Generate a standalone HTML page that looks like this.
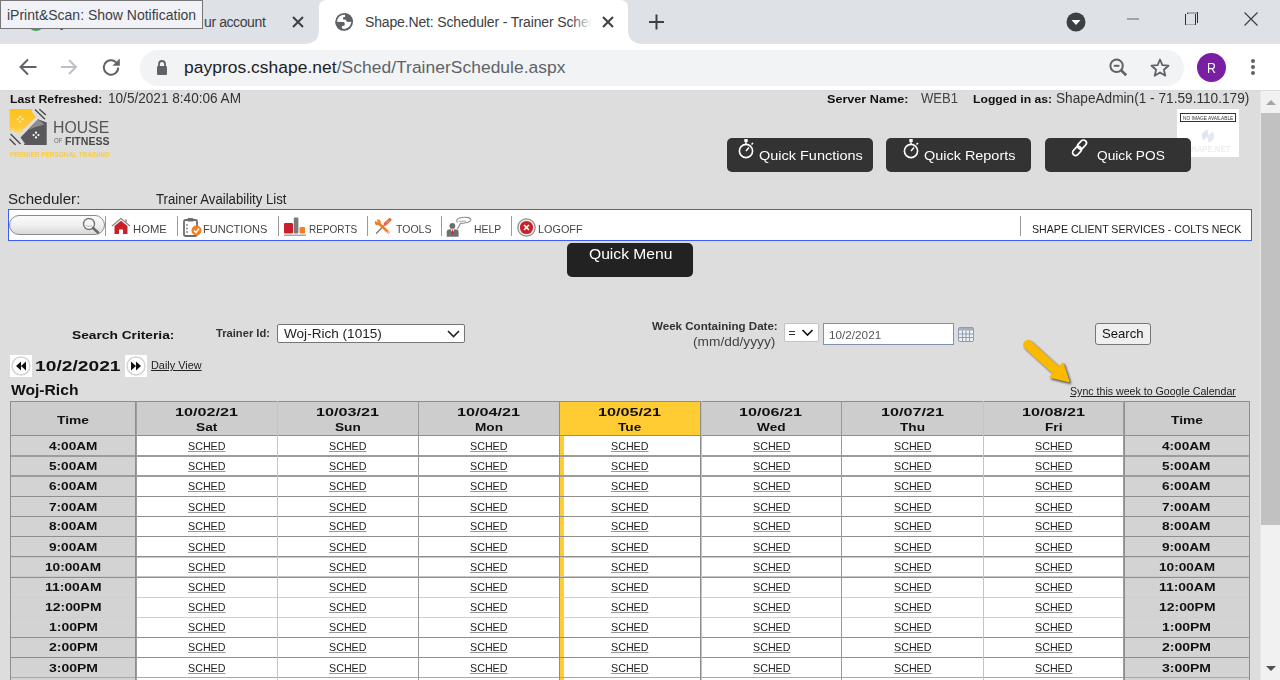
<!DOCTYPE html>
<html><head><meta charset="utf-8">
<style>
*{margin:0;padding:0;box-sizing:border-box}
html,body{width:1280px;height:680px;overflow:hidden;background:#dddddd;font-family:"Liberation Sans",sans-serif;position:relative}
.abs{position:absolute}
#tabs{left:0;top:0;width:1280px;height:44px;background:#dee1e6}
#addr{left:0;top:44px;width:1280px;height:46px;background:#fff}
#sep{left:0;top:90px;width:1280px;height:1px;background:#d9dadd}
#omni{left:140px;top:50px;width:1044px;height:36px;border-radius:18px;background:#f1f3f4}
.url{left:184px;top:57px;font-size:17.4px;color:#202124;white-space:nowrap;letter-spacing:0.05px}
.url span{color:#5f6368}
#page{left:0;top:91px;width:1260px;height:589px;background:#dddddd;overflow:hidden}
#sb{left:1260px;top:91px;width:20px;height:589px;background:#f1f1f1;border-left:1px solid #e6e6e6}
#thumb{left:1261px;top:113px;width:19px;height:412px;background:#c1c1c1}
.t{position:absolute;white-space:nowrap}
</style></head><body>
<div id="tabs" class="abs"></div>
<!-- inactive tab -->
<div class="abs t" style="left:204px;top:14px;font-size:14px;letter-spacing:-0.4px;color:#3c4043">ur account</div>
<svg class="abs" style="left:291px;top:15px" width="14" height="14" viewBox="0 0 14 14"><path d="M2 2L12 12M12 2L2 12" stroke="#3c4043" stroke-width="2"/></svg>
<!-- active tab -->
<svg class="abs" style="left:303px;top:0" width="341" height="44" viewBox="0 0 341 44"><path d="M0 44 Q16 44 16 30 L16 8 Q16 0 24 0 L317 0 Q325 0 325 8 L325 30 Q325 44 341 44 Z" fill="#fff"/></svg>
<svg class="abs" style="left:334px;top:12px" width="20" height="20" viewBox="-10.15 -9.85 20 20"><defs><clipPath id="gc"><circle r="8.9"/></clipPath></defs><circle r="8.9" fill="#fff"/><g clip-path="url(#gc)" fill="#5f6368"><path d="M1 -9 L1 -5.1 C0 -4.9 -1 -4.7 -1.1 -4 L-1.2 -2.5 C-0.5 -2 1.2 -2.2 1.7 -1.9 C2.3 -1.3 2.2 -0.4 3 0 C4.5 0.3 6 0 9 -0.3 L9 -9 Z"/><path d="M-9 -0.2 L-0.6 0.2 C0.3 0.5 0.5 1 0.5 1.5 L0.5 3.6 C-0.5 3.8 -2.3 4.2 -2.3 5 L-2.3 6.8 C-2 8 -1 9 -0.5 9 L-9 9 Z"/></g><circle r="8" fill="none" stroke="#5f6368" stroke-width="1.8"/></svg>
<div class="abs t" style="left:365px;top:14px;font-size:14px;letter-spacing:-0.15px;color:#3c4043;width:227px;overflow:hidden">Shape.Net: Scheduler - Trainer Schedule</div>
<div class="abs" style="left:571px;top:10px;width:21px;height:24px;background:linear-gradient(to right,rgba(255,255,255,0),#fff)"></div>
<svg class="abs" style="left:601px;top:15px" width="14" height="14" viewBox="0 0 14 14"><path d="M2 2L12 12M12 2L2 12" stroke="#3c4043" stroke-width="2"/></svg>
<svg class="abs" style="left:648px;top:14px" width="17" height="16" viewBox="0 0 17 16"><path d="M8.5 0.5V15.5M1 8H16" stroke="#3c4043" stroke-width="2"/></svg>
<!-- window controls -->
<svg class="abs" style="left:1066px;top:12px" width="20" height="20" viewBox="0 0 20 20"><circle cx="10" cy="10" r="9.5" fill="#3c4043"/><path d="M5.5 8 L14.5 8 L10 13 Z" fill="#fff"/></svg>
<div class="abs" style="left:1127px;top:18px;width:12px;height:2px;background:#a0a4a8"></div>
<div class="abs" style="left:1187px;top:12px;width:11px;height:2px;background:#a9abae"></div><div class="abs" style="left:1185px;top:24px;width:11px;height:1px;background:#a9abae"></div><div class="abs" style="left:1185px;top:14px;width:1px;height:11px;background:#2d2f31"></div><div class="abs" style="left:1195px;top:14px;width:1px;height:11px;background:#2d2f31"></div><div class="abs" style="left:1197px;top:12px;width:1px;height:11px;background:#2d2f31"></div><div class="abs" style="left:1187px;top:13px;width:1px;height:1px;background:#2d2f31"></div>
<svg class="abs" style="left:1243px;top:11px" width="16" height="16" viewBox="0 0 16 16"><path d="M1.5 1.5L14.5 14.5M14.5 1.5L1.5 14.5" stroke="#3c4043" stroke-width="1.2"/></svg>

<div id="addr" class="abs"></div>
<div id="sep" class="abs"></div>
<svg class="abs" style="left:18px;top:57px" width="20" height="20" viewBox="0 0 20 20"><path d="M18.5 10H3M10 2.5L2.5 10L10 17.5" stroke="#5f6368" stroke-width="2" fill="none"/></svg>
<svg class="abs" style="left:59px;top:57px" width="20" height="20" viewBox="0 0 20 20"><path d="M2 10H17M10 3L17 10L10 17" stroke="#bdc1c6" stroke-width="2" fill="none"/></svg>
<svg class="abs" style="left:101px;top:57px" width="21" height="21" viewBox="0 0 21 21"><path d="M17.2 10.5A7.2 7.2 0 1 1 15.1 5.4" stroke="#5f6368" stroke-width="2" fill="none"/><path d="M18.8 1.5V8.8H11.5Z" fill="#5f6368"/></svg>
<div id="omni" class="abs"></div>
<svg class="abs" style="left:155px;top:58px" width="14" height="18" viewBox="0 0 14 18"><path d="M4 8.5V6A3 3 0 0 1 10 6V8.5" stroke="#5f6368" stroke-width="1.8" fill="none"/><rect x="2" y="8" width="10" height="9" rx="1.2" fill="#5f6368"/></svg>
<div class="abs t url">paypros.cshape.net<span>/Sched/TrainerSchedule.aspx</span></div>
<svg class="abs" style="left:1108px;top:57px" width="22" height="22" viewBox="0 0 22 22"><circle cx="8.6" cy="8.8" r="6.2" stroke="#5f6368" stroke-width="2" fill="none"/><path d="M13.3 13.5L18.2 18.2" stroke="#5f6368" stroke-width="2.6"/><path d="M5.8 8.8H11.4" stroke="#5f6368" stroke-width="2"/></svg>
<svg class="abs" style="left:1149px;top:57px" width="22" height="22" viewBox="0 0 22 22"><path d="M11 2.5L13.4 8.2L19.5 8.7L14.9 12.7L16.3 18.7L11 15.5L5.7 18.7L7.1 12.7L2.5 8.7L8.6 8.2Z" stroke="#5f6368" stroke-width="1.8" fill="none" stroke-linejoin="round"/></svg>
<div class="abs" style="left:1197px;top:53px;width:29px;height:29px;border-radius:50%;background:#7b1fa2"></div>
<div class="abs t" style="left:1197px;top:59px;width:29px;text-align:center;font-size:15px;line-height:17px;color:#fff;transform:scaleX(0.82)">R</div>
<div class="abs" style="left:1250.7px;top:58.5px;width:4px;height:4px;border-radius:50%;background:#5f6368"></div>
<div class="abs" style="left:1250.7px;top:65px;width:4px;height:4px;border-radius:50%;background:#5f6368"></div>
<div class="abs" style="left:1250.7px;top:71.3px;width:4px;height:4px;border-radius:50%;background:#5f6368"></div>

<svg class="abs" style="left:26px;top:12px" width="20" height="20" viewBox="0 0 20 20"><circle cx="10" cy="10" r="8" fill="none" stroke="#34a853" stroke-width="2"/></svg>
<div class="abs t" style="left:60px;top:14px;font-size:14px;color:#3c4043">y</div>
<!-- tooltip -->
<div class="abs" style="left:0;top:0;width:203px;height:29px;background:#f1f2f8;border:1px solid #767676"></div>
<div class="abs t" style="left:7px;top:7px;font-size:14px;color:#3c4043">iPrint&amp;Scan: Show Notification</div>

<div id="page" class="abs"></div>
<div class="abs" style="left:9.60px;top:94px;font-family:'Liberation Sans';font-size:11.3px;font-weight:bold;letter-spacing:0px;white-space:nowrap;line-height:1;color:#111;transform:scaleX(1.0824);transform-origin:0 0;">Last Refreshed:</div>
<div class="abs" style="left:108.02px;top:92px;font-family:'Liberation Sans';font-size:13.8px;font-weight:normal;letter-spacing:0px;white-space:nowrap;line-height:1;color:#333;transform:scaleX(0.9850);transform-origin:0 0;">10/5/2021 8:40:06 AM</div>
<div class="abs" style="left:826.60px;top:94px;font-family:'Liberation Sans';font-size:11.3px;font-weight:bold;letter-spacing:0px;white-space:nowrap;line-height:1;color:#111;transform:scaleX(1.1167);transform-origin:0 0;">Server Name:</div>
<div class="abs" style="left:921.00px;top:92px;font-family:'Liberation Sans';font-size:13.8px;font-weight:normal;letter-spacing:0px;white-space:nowrap;line-height:1;color:#444;transform:scaleX(0.9487);transform-origin:0 0;">WEB1</div>
<div class="abs" style="left:973.00px;top:94px;font-family:'Liberation Sans';font-size:11.3px;font-weight:bold;letter-spacing:0px;white-space:nowrap;line-height:1;color:#111;transform:scaleX(1.0781);transform-origin:0 0;">Logged in as:</div>
<div class="abs" style="left:1056.41px;top:92px;font-family:'Liberation Sans';font-size:13.8px;font-weight:normal;letter-spacing:0px;white-space:nowrap;line-height:1;color:#333;transform:scaleX(0.9897);transform-origin:0 0;">ShapeAdmin(1 - 71.59.110.179)</div>
<svg class="abs" style="left:9px;top:107px" width="42" height="42" viewBox="0 0 42 42">
<defs><linearGradient id="yg" x1="0" y1="0" x2="0" y2="1"><stop offset="0" stop-color="#fcc21c"/><stop offset="0.7" stop-color="#fcc93a"/><stop offset="1" stop-color="#fde08a"/></linearGradient></defs>
<path d="M0.6 2 L23.8 2 L22.5 4.3 L27 9.9 L9.2 27.8 L3.6 23 L0.6 25 Z" fill="url(#yg)"/>
<path d="M29 12.2 L37.7 15.5 L37.7 38 L14.8 38 L15.8 36.4 L11.5 30.4 Z" fill="#58585a"/>
<path d="M29 12.2 L35.5 17.5 Q28 19 19.5 23 Z" fill="#8d8d8f"/>
<g stroke="#4a4a4c" stroke-width="1.4"><path d="M26 2.6 L36 12.2 M30.4 2.3 L36.9 8.1 M1.6 27.1 L11.5 37 M0.6 32 L6.6 38"/></g>
<circle cx="11.2" cy="9.799999999999999" r="1.15" fill="#fde9a6"/><circle cx="11.2" cy="14.6" r="1.15" fill="#fde9a6"/><circle cx="8.799999999999999" cy="12.2" r="1.15" fill="#fde9a6"/><circle cx="13.6" cy="12.2" r="1.15" fill="#fde9a6"/><circle cx="27" cy="25.700000000000003" r="1.15" fill="#f4f4f4"/><circle cx="27" cy="30.5" r="1.15" fill="#f4f4f4"/><circle cx="24.6" cy="28.1" r="1.15" fill="#f4f4f4"/><circle cx="29.4" cy="28.1" r="1.15" fill="#f4f4f4"/>
</svg>
<div class="abs" style="left:52.84px;top:119px;font-family:'Liberation Sans';font-size:16.5px;font-weight:normal;letter-spacing:0px;white-space:nowrap;line-height:1;color:#555557;transform:scaleX(0.9579);transform-origin:0 0;">HOUSE</div>
<div class="abs" style="left:53.50px;top:137px;font-family:'Liberation Sans';font-size:7px;font-weight:normal;letter-spacing:0px;white-space:nowrap;line-height:1;color:#666;transform:scaleX(0.8600);transform-origin:0 0;">OF</div>
<div class="abs" style="left:64.90px;top:136px;font-family:'Liberation Sans';font-size:10.5px;font-weight:bold;letter-spacing:0px;white-space:nowrap;line-height:1;color:#48484a;transform:scaleX(1.0045);transform-origin:0 0;">FITNESS</div>
<div class="abs" style="left:9.60px;top:151px;font-family:'Liberation Sans';font-size:7px;font-weight:bold;letter-spacing:0px;white-space:nowrap;line-height:1;color:#f8cc45;transform:scaleX(0.9213);transform-origin:0 0;">PREMIER PERSONAL TRAINING</div>
<div class="abs" style="left:1177px;top:109px;width:62px;height:48px;background:#fff;"></div>
<div class="abs" style="left:1180px;top:113px;width:56px;height:9px;border:1px solid #333"></div>
<div class="abs" style="left:1183.00px;top:116px;font-family:'Liberation Sans';font-size:5px;font-weight:normal;letter-spacing:0px;white-space:nowrap;line-height:1;color:#333;transform:scaleX(0.9615);transform-origin:0 0;">NO IMAGE AVAILABLE</div>
<svg class="abs" style="left:1201px;top:129px" width="14" height="14" viewBox="0 0 14 14"><path d="M7 1A6 6 0 0 0 3 11.5Q5 7 9 8Q6 5 7 1Z" fill="#dfe4ef"/><path d="M7 13A6 6 0 0 0 11 2.5Q9 7 5 6Q8 9 7 13Z" fill="#e3e8f2"/></svg>
<div class="abs" style="left:1191.00px;top:144px;font-family:'Liberation Sans';font-size:9.5px;font-weight:bold;letter-spacing:0px;white-space:nowrap;line-height:1;color:#ecedf1;transform:scaleX(0.8208);transform-origin:0 0;">HAPE.NET</div>
<div class="abs" style="left:727px;top:138px;width:146px;height:34px;background:#333;border-radius:5px"></div>
<div class="abs" style="left:758.70px;top:149px;font-family:'Liberation Sans';font-size:13px;font-weight:normal;letter-spacing:0px;white-space:nowrap;line-height:1;color:#fff;transform:scaleX(1.1129);transform-origin:0 0;">Quick Functions</div>
<svg class="abs" style="left:737px;top:136px" width="18" height="24" viewBox="0 0 18 24"><circle cx="9" cy="15" r="6.6" fill="none" stroke="#fff" stroke-width="1.6"/><rect x="7.3" y="3" width="3.4" height="3" fill="#fff"/><path d="M9 6V8" stroke="#fff" stroke-width="1.4"/><path d="M14.5 8.5L16 7" stroke="#fff" stroke-width="1.6"/><path d="M9 15L12 11.5" stroke="#fff" stroke-width="1.5"/></svg>
<div class="abs" style="left:886px;top:138px;width:145px;height:34px;background:#333;border-radius:5px"></div>
<div class="abs" style="left:923.80px;top:149px;font-family:'Liberation Sans';font-size:13px;font-weight:normal;letter-spacing:0px;white-space:nowrap;line-height:1;color:#fff;transform:scaleX(1.1098);transform-origin:0 0;">Quick Reports</div>
<svg class="abs" style="left:902px;top:136px" width="18" height="24" viewBox="0 0 18 24"><circle cx="9" cy="15" r="6.6" fill="none" stroke="#fff" stroke-width="1.6"/><rect x="7.3" y="3" width="3.4" height="3" fill="#fff"/><path d="M9 6V8" stroke="#fff" stroke-width="1.4"/><path d="M14.5 8.5L16 7" stroke="#fff" stroke-width="1.6"/><path d="M9 15L12 11.5" stroke="#fff" stroke-width="1.5"/></svg>
<div class="abs" style="left:1045px;top:138px;width:146px;height:34px;background:#333;border-radius:5px"></div>
<div class="abs" style="left:1096.50px;top:149px;font-family:'Liberation Sans';font-size:13px;font-weight:normal;letter-spacing:0px;white-space:nowrap;line-height:1;color:#fff;transform:scaleX(1.0547);transform-origin:0 0;">Quick POS</div>
<svg class="abs" style="left:1069px;top:137px" width="24" height="24" viewBox="0 0 24 24"><g fill="none" stroke="#fff" stroke-width="1.7"><rect x="10" y="2.5" width="6" height="10" rx="3" transform="rotate(45 13 7.5)"/><rect x="5" y="9" width="6" height="10" rx="3" transform="rotate(45 8 14)"/></g></svg>
<div class="abs" style="left:8.42px;top:191px;font-family:'Liberation Sans';font-size:15.5px;font-weight:normal;letter-spacing:0px;white-space:nowrap;line-height:1;color:#222;transform:scaleX(0.9764);transform-origin:0 0;">Scheduler:</div>
<div class="abs" style="left:155.80px;top:192px;font-family:'Liberation Sans';font-size:14px;font-weight:normal;letter-spacing:0px;white-space:nowrap;line-height:1;color:#222;transform:scaleX(0.9424);transform-origin:0 0;">Trainer Availability List</div>
<div class="abs" style="left:8px;top:209px;width:1244px;height:32px;background:#fff;border:1px solid #3d5bf5"></div>
<div class="abs" style="left:9px;top:215px;width:96px;height:20px;border-radius:10px;border:1px solid #8a8a8a;background:linear-gradient(#fbfbfb,#f0f0f0 50%,#d9d9d9)"></div>
<svg class="abs" style="left:82px;top:217px" width="18" height="17" viewBox="0 0 18 17"><circle cx="7" cy="7" r="5.5" fill="#f4f4f4" stroke="#777" stroke-width="1.4"/><path d="M4 8.5Q7 10.5 10 8.5" stroke="#bbb" fill="none"/><path d="M11 11L16 15.5" stroke="#666" stroke-width="2.4" stroke-linecap="round"/></svg>
<div class="abs" style="left:105.3px;top:216px;width:1px;height:20px;background:#9a9a9a;"></div>
<div class="abs" style="left:177.1px;top:216px;width:1px;height:20px;background:#9a9a9a;"></div>
<div class="abs" style="left:278.1px;top:216px;width:1px;height:20px;background:#9a9a9a;"></div>
<div class="abs" style="left:367.4px;top:216px;width:1px;height:20px;background:#9a9a9a;"></div>
<div class="abs" style="left:441.1px;top:216px;width:1px;height:20px;background:#9a9a9a;"></div>
<div class="abs" style="left:510.5px;top:216px;width:1px;height:20px;background:#9a9a9a;"></div>
<div class="abs" style="left:1019.9px;top:216px;width:1px;height:20px;background:#9a9a9a;"></div>
<svg class="abs" style="left:111px;top:217px" width="20" height="18" viewBox="0 0 20 18"><path d="M1 9L10 1.5L19 9" stroke="#888" stroke-width="1.3" fill="none"/><path d="M15 2.5V5" stroke="#888" stroke-width="1.5"/><path d="M3.5 9L10 3.8L16.5 9V17H12V12.5H8V17H3.5Z" fill="#c8202b"/></svg>
<div class="abs" style="left:133.03px;top:223px;font-family:'Liberation Sans';font-size:11.6px;font-weight:normal;letter-spacing:0px;white-space:nowrap;line-height:1;color:#444;transform:scaleX(0.9706);transform-origin:0 0;">HOME</div>
<svg class="abs" style="left:183px;top:217px" width="19" height="20" viewBox="0 0 19 20"><rect x="1" y="3" width="13" height="16" rx="1.5" fill="#fff" stroke="#6d6d6d" stroke-width="1.8"/><rect x="4.5" y="1" width="6" height="3.5" rx="1" fill="#6d6d6d"/><g fill="#8c8c8c"><circle cx="4" cy="8" r="1"/><circle cx="4" cy="11.5" r="1"/><circle cx="4" cy="15" r="1"/></g><circle cx="13.5" cy="13.5" r="5" fill="#f47e20"/><path d="M11 13.5L13 15.5L16 11.5" stroke="#fff" stroke-width="1.5" fill="none"/></svg>
<div class="abs" style="left:203.05px;top:223px;font-family:'Liberation Sans';font-size:11.6px;font-weight:normal;letter-spacing:0px;white-space:nowrap;line-height:1;color:#444;transform:scaleX(0.9507);transform-origin:0 0;">FUNCTIONS</div>
<svg class="abs" style="left:284px;top:217px" width="22" height="20" viewBox="0 0 22 20"><rect x="0" y="6" width="9" height="10.5" rx="1.2" fill="#c8202b"/><rect x="9.8" y="0.5" width="4.6" height="16" rx="1" fill="#7a7a7a"/><rect x="15.5" y="10" width="5.5" height="6.5" rx="1" fill="#f47e20"/><rect x="0" y="17.5" width="22" height="1.5" fill="#a5a5a5"/></svg>
<div class="abs" style="left:308.64px;top:223px;font-family:'Liberation Sans';font-size:11.6px;font-weight:normal;letter-spacing:0px;white-space:nowrap;line-height:1;color:#444;transform:scaleX(0.8636);transform-origin:0 0;">REPORTS</div>
<svg class="abs" style="left:374px;top:218px" width="18" height="18" viewBox="0 0 18 18"><path d="M11 6.5L2.5 15.2" stroke="#7a7a7a" stroke-width="1.3" stroke-linecap="round"/><path d="M11.5 5.8L15.8 1.8" stroke="#e0694a" stroke-width="3.4" stroke-linecap="round"/><path d="M12.3 3.3L14.3 5.3M13.6 2.2L15.6 4.2" stroke="#f5b8a0" stroke-width="0.7"/><path d="M5 5.5L14.4 14.2" stroke="#f47e20" stroke-width="2.7" stroke-linecap="round"/><circle cx="3.8" cy="4.4" r="2.9" fill="#f47e20"/><path d="M3.8 4.4L0.6 2.6L2.4 0.6Z" fill="#fff"/><circle cx="14.3" cy="14.1" r="0.8" fill="#fff"/></svg>
<div class="abs" style="left:395.60px;top:223px;font-family:'Liberation Sans';font-size:11.6px;font-weight:normal;letter-spacing:0px;white-space:nowrap;line-height:1;color:#444;transform:scaleX(0.9077);transform-origin:0 0;">TOOLS</div>
<svg class="abs" style="left:446px;top:216px" width="26" height="22" viewBox="0 0 26 22"><path d="M11.5 6.5Q9 3.5 13.5 2Q18 0.6 22.5 1.6Q25.5 2.5 24.6 4.6Q23.5 6.8 17 7.3L14.5 7.4L11.3 13.2" stroke="#8e8e8e" stroke-width="1.1" fill="none"/><path d="M12.5 5.2H20" stroke="#b5b5b5" stroke-width="1.2"/><circle cx="6.4" cy="9.9" r="2.9" fill="#6d6d6d"/><path d="M0.7 20.8V16Q0.7 13.2 4 13.2H9Q12.6 13.2 12.6 16V20.8Z" fill="#707070"/><path d="M4.6 13.2L6.6 17L8.6 13.2Z" fill="#fff"/><path d="M6.2 13.8L5.8 17L6.6 18.6L7.4 17L7 13.8Z" fill="#c8202b"/></svg>
<div class="abs" style="left:473.51px;top:223px;font-family:'Liberation Sans';font-size:11.6px;font-weight:normal;letter-spacing:0px;white-space:nowrap;line-height:1;color:#444;transform:scaleX(0.8931);transform-origin:0 0;">HELP</div>
<svg class="abs" style="left:517px;top:218px" width="19" height="19" viewBox="0 0 19 19"><circle cx="9.5" cy="9.5" r="8.7" fill="#eee" stroke="#8a8a8a" stroke-width="1.2"/><circle cx="9.5" cy="9.5" r="6.6" fill="#cc1f26"/><path d="M7 7L12 12M12 7L7 12" stroke="#fff" stroke-width="1.6"/></svg>
<div class="abs" style="left:538.07px;top:223px;font-family:'Liberation Sans';font-size:11.6px;font-weight:normal;letter-spacing:0px;white-space:nowrap;line-height:1;color:#444;transform:scaleX(0.9348);transform-origin:0 0;">LOGOFF</div>
<div class="abs" style="left:1031.50px;top:223px;font-family:'Liberation Sans';font-size:11.6px;font-weight:normal;letter-spacing:0px;white-space:nowrap;line-height:1;color:#222;transform:scaleX(0.9148);transform-origin:0 0;">SHAPE CLIENT SERVICES - COLTS NECK</div>
<div class="abs" style="left:567px;top:243px;width:126px;height:34px;background:#222;border-radius:5px"></div>
<div class="abs" style="left:589.00px;top:246px;font-family:'Liberation Sans';font-size:15px;font-weight:normal;letter-spacing:0px;white-space:nowrap;line-height:1;color:#fff;transform:scaleX(1.0430);transform-origin:0 0;">Quick Menu</div>
<div class="abs" style="left:71.70px;top:330px;font-family:'Liberation Sans';font-size:11.3px;font-weight:bold;letter-spacing:0px;white-space:nowrap;line-height:1;color:#111;transform:scaleX(1.2169);transform-origin:0 0;">Search Criteria:</div>
<div class="abs" style="left:215.50px;top:328px;font-family:'Liberation Sans';font-size:11px;font-weight:bold;letter-spacing:0px;white-space:nowrap;line-height:1;color:#333;transform:scaleX(1.0151);transform-origin:0 0;">Trainer Id:</div>
<div class="abs" style="left:277px;top:324px;width:188px;height:19px;background:#fff;border:1px solid #767676;border-radius:2px"></div>
<div class="abs" style="left:283.70px;top:327px;font-family:'Liberation Sans';font-size:13.5px;font-weight:normal;letter-spacing:0px;white-space:nowrap;line-height:1;color:#222;transform:scaleX(1.0052);transform-origin:0 0;">Woj-Rich (1015)</div>
<svg class="abs" style="left:447px;top:330px" width="13" height="8" viewBox="0 0 13 8"><path d="M1 1L6.5 6.5L12 1" stroke="#222" stroke-width="1.6" fill="none"/></svg>
<div class="abs" style="left:651.50px;top:321px;font-family:'Liberation Sans';font-size:11.5px;font-weight:bold;letter-spacing:0px;white-space:nowrap;line-height:1;color:#333;transform:scaleX(1.0056);transform-origin:0 0;">Week Containing Date:</div>
<div class="abs" style="left:692.98px;top:335px;font-family:'Liberation Sans';font-size:13.5px;font-weight:normal;letter-spacing:0px;white-space:nowrap;line-height:1;color:#444;transform:scaleX(1.0175);transform-origin:0 0;">(mm/dd/yyyy)</div>
<div class="abs" style="left:784px;top:323px;width:35px;height:19px;background:#fff;border:1px solid #c3c3c3;border-radius:2px"></div>
<svg class="abs" style="left:788px;top:328px" width="28" height="9" viewBox="0 0 28 9"><path d="M1 3.5H7M1 6.5H7" stroke="#333" stroke-width="1.2"/><path d="M14.5 2L19.5 7L24.5 2" stroke="#111" stroke-width="1.6" fill="none"/></svg>
<div class="abs" style="left:823px;top:323px;width:131px;height:22px;background:#fff;border:1px solid #7f93ad"></div>
<div class="abs" style="left:829.28px;top:330px;font-family:'Liberation Sans';font-size:11.5px;font-weight:normal;letter-spacing:0px;white-space:nowrap;line-height:1;color:#555;transform:scaleX(1.0200);transform-origin:0 0;">10/2/2021</div>
<svg class="abs" style="left:958px;top:327px" width="16" height="15" viewBox="0 0 16 15"><rect x="0.5" y="0.5" width="15" height="14" rx="1.5" fill="#eef2f6" stroke="#8e9bab"/><rect x="1" y="1" width="14" height="2.5" fill="#a3aebc"/><g stroke="#8e9bab" stroke-width="1"><path d="M4.5 3.5V14M8 3.5V14M11.5 3.5V14M1 7H15M1 10.5H15"/></g></svg>
<div class="abs" style="left:1095px;top:323px;width:56px;height:22px;background:#efefef;border:1px solid #767676;border-radius:3px"></div>
<div class="abs" style="left:1101.99px;top:327px;font-family:'Liberation Sans';font-size:13px;font-weight:normal;letter-spacing:0px;white-space:nowrap;line-height:1;color:#111;transform:scaleX(1.0075);transform-origin:0 0;">Search</div>
<svg class="abs" style="left:1015px;top:335px" width="65" height="55" viewBox="0 0 65 55">
<defs><filter id="sh" x="-30%" y="-30%" width="160%" height="160%"><feGaussianBlur stdDeviation="0.9"/></filter></defs>
<g transform="translate(1.6,1.6)" filter="url(#sh)" opacity="0.75"><path d="M12.9 9.7L44 38" stroke="#222" stroke-width="9.5" stroke-linecap="round"/><path d="M35.2 42L53.8 46.5L47.7 28.3Z" fill="#222" stroke="#222" stroke-width="1.6" stroke-linejoin="round"/></g>
<path d="M12.9 9.7L44 38" stroke="#fbb900" stroke-width="9.5" stroke-linecap="round"/><path d="M35.2 42L53.8 46.5L47.7 28.3Z" fill="#fbb900" stroke="#fbb900" stroke-width="1.6" stroke-linejoin="round"/>
</svg>
<div class="abs" style="left:1070.00px;top:386px;font-family:'Liberation Sans';font-size:11px;font-weight:normal;letter-spacing:0px;white-space:nowrap;line-height:1;color:#222;transform:scaleX(0.9651);transform-origin:0 0;text-decoration:underline">Sync this week to Google Calendar</div>
<div class="abs" style="left:10px;top:355px;width:22px;height:22px;background:#fff"></div>
<svg class="abs" style="left:10px;top:355px" width="22" height="22" viewBox="0 0 22 22"><circle cx="11" cy="11" r="9" fill="none" stroke="#d4d4d4" stroke-width="1.5"/><path d="M11 6.5L6 11L11 15.5ZM16 6.5L11 11L16 15.5Z" fill="#111"/></svg>
<div class="abs" style="left:34.65px;top:359px;font-family:'Liberation Sans';font-size:14.2px;font-weight:bold;letter-spacing:0px;white-space:nowrap;line-height:1;color:#111;transform:scaleX(1.3548);transform-origin:0 0;">10/2/2021</div>
<div class="abs" style="left:125px;top:355px;width:22px;height:22px;background:#fff"></div>
<svg class="abs" style="left:125px;top:355px" width="22" height="22" viewBox="0 0 22 22"><circle cx="11" cy="11" r="9" fill="none" stroke="#d4d4d4" stroke-width="1.5"/><path d="M6 6.5L11 11L6 15.5ZM11 6.5L16 11L11 15.5Z" fill="#111"/></svg>
<div class="abs" style="left:151.01px;top:360px;font-family:'Liberation Sans';font-size:11px;font-weight:normal;letter-spacing:0px;white-space:nowrap;line-height:1;color:#222;transform:scaleX(0.9880);transform-origin:0 0;text-decoration:underline">Daily View</div>
<div class="abs" style="left:11.20px;top:383px;font-family:'Liberation Sans';font-size:14px;font-weight:bold;letter-spacing:0px;white-space:nowrap;line-height:1;color:#111;transform:scaleX(1.1167);transform-origin:0 0;">Woj-Rich</div>
<div class="abs" style="left:10px;top:401px;width:1240px;height:279px;background:#fff;"></div>
<div class="abs" style="left:10px;top:401px;width:1240px;height:34px;background:#cdcdcd;"></div>
<div class="abs" style="left:560px;top:402px;width:141px;height:33px;background:#ffcc33;"></div>
<div class="abs" style="left:10px;top:435px;width:126px;height:245px;background:#d3d3d3;"></div>
<div class="abs" style="left:1124px;top:435px;width:126px;height:245px;background:#d3d3d3;"></div>
<div class="abs" style="left:560px;top:435px;width:4px;height:245px;background:#ffcc33;"></div>
<div class="abs" style="left:10px;top:401px;width:1240px;height:1px;background:#8e8e8e;"></div>
<div class="abs" style="left:10px;top:435px;width:1240px;height:1px;background:#8e8e8e;"></div>
<div class="abs" style="left:10px;top:455px;width:1240px;height:1px;background:#9c9c9c;"></div>
<div class="abs" style="left:10px;top:456px;width:1240px;height:1px;background:#9c9c9c;"></div>
<div class="abs" style="left:10px;top:475px;width:1240px;height:1px;background:#9c9c9c;"></div>
<div class="abs" style="left:10px;top:476px;width:1240px;height:1px;background:#9c9c9c;"></div>
<div class="abs" style="left:10px;top:496px;width:1240px;height:1px;background:#8e8e8e;"></div>
<div class="abs" style="left:10px;top:516px;width:1240px;height:1px;background:#8e8e8e;"></div>
<div class="abs" style="left:10px;top:536px;width:1240px;height:1px;background:#8e8e8e;"></div>
<div class="abs" style="left:10px;top:556px;width:1240px;height:1px;background:#8e8e8e;"></div>
<div class="abs" style="left:10px;top:557px;width:1240px;height:1px;background:#c8c8c8;"></div>
<div class="abs" style="left:10px;top:576px;width:1240px;height:1px;background:#c8c8c8;"></div>
<div class="abs" style="left:10px;top:577px;width:1240px;height:1px;background:#8e8e8e;"></div>
<div class="abs" style="left:10px;top:597px;width:1240px;height:1px;background:#cfcfcf;"></div>
<div class="abs" style="left:10px;top:617px;width:1240px;height:1px;background:#cfcfcf;"></div>
<div class="abs" style="left:10px;top:637px;width:1240px;height:1px;background:#8e8e8e;"></div>
<div class="abs" style="left:10px;top:657px;width:1240px;height:1px;background:#8e8e8e;"></div>
<div class="abs" style="left:10px;top:677px;width:1240px;height:1px;background:#a8a8a8;"></div>
<div class="abs" style="left:10px;top:401px;width:1px;height:279px;background:#8e8e8e;"></div>
<div class="abs" style="left:135px;top:401px;width:1px;height:279px;background:#8e8e8e;"></div>
<div class="abs" style="left:136px;top:401px;width:1px;height:279px;background:#9c9c9c;"></div>
<div class="abs" style="left:277px;top:401px;width:1px;height:279px;background:#c4c4c4;"></div>
<div class="abs" style="left:418px;top:401px;width:1px;height:279px;background:#999;"></div>
<div class="abs" style="left:559px;top:401px;width:1px;height:279px;background:#8e8e8e;"></div>
<div class="abs" style="left:700px;top:401px;width:1px;height:279px;background:#8e8e8e;"></div>
<div class="abs" style="left:701px;top:401px;width:1px;height:279px;background:#c0c0c0;"></div>
<div class="abs" style="left:841px;top:401px;width:1px;height:279px;background:#999;"></div>
<div class="abs" style="left:983px;top:401px;width:1px;height:279px;background:#c4c4c4;"></div>
<div class="abs" style="left:1123px;top:401px;width:1px;height:279px;background:#9c9c9c;"></div>
<div class="abs" style="left:1124px;top:401px;width:1px;height:279px;background:#8e8e8e;"></div>
<div class="abs" style="left:1249px;top:401px;width:1px;height:279px;background:#8e8e8e;"></div>
<div class="abs" style="left:174.95px;top:407px;font-family:'Liberation Sans';font-size:11px;font-weight:bold;letter-spacing:0px;white-space:nowrap;line-height:1;color:#111;transform:scaleX(1.4721);transform-origin:0 0;">10/02/21</div>
<div class="abs" style="left:196.00px;top:422px;font-family:'Liberation Sans';font-size:11px;font-weight:bold;letter-spacing:0px;white-space:nowrap;line-height:1;color:#111;transform:scaleX(1.2471);transform-origin:0 0;">Sat</div>
<div class="abs" style="left:316.08px;top:407px;font-family:'Liberation Sans';font-size:11px;font-weight:bold;letter-spacing:0px;white-space:nowrap;line-height:1;color:#111;transform:scaleX(1.4721);transform-origin:0 0;">10/03/21</div>
<div class="abs" style="left:335.33px;top:422px;font-family:'Liberation Sans';font-size:11px;font-weight:bold;letter-spacing:0px;white-space:nowrap;line-height:1;color:#111;transform:scaleX(1.2400);transform-origin:0 0;">Sun</div>
<div class="abs" style="left:457.20px;top:407px;font-family:'Liberation Sans';font-size:11px;font-weight:bold;letter-spacing:0px;white-space:nowrap;line-height:1;color:#111;transform:scaleX(1.4721);transform-origin:0 0;">10/04/21</div>
<div class="abs" style="left:475.21px;top:422px;font-family:'Liberation Sans';font-size:11px;font-weight:bold;letter-spacing:0px;white-space:nowrap;line-height:1;color:#111;transform:scaleX(1.2400);transform-origin:0 0;">Mon</div>
<div class="abs" style="left:598.33px;top:407px;font-family:'Liberation Sans';font-size:11px;font-weight:bold;letter-spacing:0px;white-space:nowrap;line-height:1;color:#111;transform:scaleX(1.4721);transform-origin:0 0;">10/05/21</div>
<div class="abs" style="left:618.20px;top:422px;font-family:'Liberation Sans';font-size:11px;font-weight:bold;letter-spacing:0px;white-space:nowrap;line-height:1;color:#111;transform:scaleX(1.2400);transform-origin:0 0;">Tue</div>
<div class="abs" style="left:739.45px;top:407px;font-family:'Liberation Sans';font-size:11px;font-weight:bold;letter-spacing:0px;white-space:nowrap;line-height:1;color:#111;transform:scaleX(1.4721);transform-origin:0 0;">10/06/21</div>
<div class="abs" style="left:756.84px;top:422px;font-family:'Liberation Sans';font-size:11px;font-weight:bold;letter-spacing:0px;white-space:nowrap;line-height:1;color:#111;transform:scaleX(1.2400);transform-origin:0 0;">Wed</div>
<div class="abs" style="left:880.58px;top:407px;font-family:'Liberation Sans';font-size:11px;font-weight:bold;letter-spacing:0px;white-space:nowrap;line-height:1;color:#111;transform:scaleX(1.4721);transform-origin:0 0;">10/07/21</div>
<div class="abs" style="left:899.83px;top:422px;font-family:'Liberation Sans';font-size:11px;font-weight:bold;letter-spacing:0px;white-space:nowrap;line-height:1;color:#111;transform:scaleX(1.2400);transform-origin:0 0;">Thu</div>
<div class="abs" style="left:1021.70px;top:407px;font-family:'Liberation Sans';font-size:11px;font-weight:bold;letter-spacing:0px;white-space:nowrap;line-height:1;color:#111;transform:scaleX(1.4721);transform-origin:0 0;">10/08/21</div>
<div class="abs" style="left:1044.67px;top:422px;font-family:'Liberation Sans';font-size:11px;font-weight:bold;letter-spacing:0px;white-space:nowrap;line-height:1;color:#111;transform:scaleX(1.2400);transform-origin:0 0;">Fri</div>
<div class="abs" style="left:57.30px;top:415px;font-family:'Liberation Sans';font-size:11px;font-weight:bold;letter-spacing:0px;white-space:nowrap;line-height:1;color:#111;transform:scaleX(1.2560);transform-origin:0 0;">Time</div>
<div class="abs" style="left:1170.80px;top:415px;font-family:'Liberation Sans';font-size:11px;font-weight:bold;letter-spacing:0px;white-space:nowrap;line-height:1;color:#111;transform:scaleX(1.2560);transform-origin:0 0;">Time</div>
<div class="abs" style="left:48.85px;top:441px;font-family:'Liberation Sans';font-size:11px;font-weight:bold;letter-spacing:0px;white-space:nowrap;line-height:1;color:#111;transform:scaleX(1.2385);transform-origin:0 0;">4:00AM</div>
<div class="abs" style="left:1162.35px;top:441px;font-family:'Liberation Sans';font-size:11px;font-weight:bold;letter-spacing:0px;white-space:nowrap;line-height:1;color:#111;transform:scaleX(1.2385);transform-origin:0 0;">4:00AM</div>
<div class="abs" style="left:188.00px;top:441px;font-family:'Liberation Sans';font-size:11px;font-weight:normal;letter-spacing:0px;white-space:nowrap;line-height:1;color:#222;transform:scaleX(0.9737);transform-origin:0 0;text-decoration:underline;text-decoration-color:#999">SCHED</div>
<div class="abs" style="left:329.12px;top:441px;font-family:'Liberation Sans';font-size:11px;font-weight:normal;letter-spacing:0px;white-space:nowrap;line-height:1;color:#222;transform:scaleX(0.9737);transform-origin:0 0;text-decoration:underline;text-decoration-color:#999">SCHED</div>
<div class="abs" style="left:470.25px;top:441px;font-family:'Liberation Sans';font-size:11px;font-weight:normal;letter-spacing:0px;white-space:nowrap;line-height:1;color:#222;transform:scaleX(0.9737);transform-origin:0 0;text-decoration:underline;text-decoration-color:#999">SCHED</div>
<div class="abs" style="left:611.38px;top:441px;font-family:'Liberation Sans';font-size:11px;font-weight:normal;letter-spacing:0px;white-space:nowrap;line-height:1;color:#222;transform:scaleX(0.9737);transform-origin:0 0;text-decoration:underline;text-decoration-color:#999">SCHED</div>
<div class="abs" style="left:752.50px;top:441px;font-family:'Liberation Sans';font-size:11px;font-weight:normal;letter-spacing:0px;white-space:nowrap;line-height:1;color:#222;transform:scaleX(0.9737);transform-origin:0 0;text-decoration:underline;text-decoration-color:#999">SCHED</div>
<div class="abs" style="left:893.62px;top:441px;font-family:'Liberation Sans';font-size:11px;font-weight:normal;letter-spacing:0px;white-space:nowrap;line-height:1;color:#222;transform:scaleX(0.9737);transform-origin:0 0;text-decoration:underline;text-decoration-color:#999">SCHED</div>
<div class="abs" style="left:1034.75px;top:441px;font-family:'Liberation Sans';font-size:11px;font-weight:normal;letter-spacing:0px;white-space:nowrap;line-height:1;color:#222;transform:scaleX(0.9737);transform-origin:0 0;text-decoration:underline;text-decoration-color:#999">SCHED</div>
<div class="abs" style="left:48.85px;top:461px;font-family:'Liberation Sans';font-size:11px;font-weight:bold;letter-spacing:0px;white-space:nowrap;line-height:1;color:#111;transform:scaleX(1.2385);transform-origin:0 0;">5:00AM</div>
<div class="abs" style="left:1162.35px;top:461px;font-family:'Liberation Sans';font-size:11px;font-weight:bold;letter-spacing:0px;white-space:nowrap;line-height:1;color:#111;transform:scaleX(1.2385);transform-origin:0 0;">5:00AM</div>
<div class="abs" style="left:188.00px;top:461px;font-family:'Liberation Sans';font-size:11px;font-weight:normal;letter-spacing:0px;white-space:nowrap;line-height:1;color:#222;transform:scaleX(0.9737);transform-origin:0 0;text-decoration:underline;text-decoration-color:#999">SCHED</div>
<div class="abs" style="left:329.12px;top:461px;font-family:'Liberation Sans';font-size:11px;font-weight:normal;letter-spacing:0px;white-space:nowrap;line-height:1;color:#222;transform:scaleX(0.9737);transform-origin:0 0;text-decoration:underline;text-decoration-color:#999">SCHED</div>
<div class="abs" style="left:470.25px;top:461px;font-family:'Liberation Sans';font-size:11px;font-weight:normal;letter-spacing:0px;white-space:nowrap;line-height:1;color:#222;transform:scaleX(0.9737);transform-origin:0 0;text-decoration:underline;text-decoration-color:#999">SCHED</div>
<div class="abs" style="left:611.38px;top:461px;font-family:'Liberation Sans';font-size:11px;font-weight:normal;letter-spacing:0px;white-space:nowrap;line-height:1;color:#222;transform:scaleX(0.9737);transform-origin:0 0;text-decoration:underline;text-decoration-color:#999">SCHED</div>
<div class="abs" style="left:752.50px;top:461px;font-family:'Liberation Sans';font-size:11px;font-weight:normal;letter-spacing:0px;white-space:nowrap;line-height:1;color:#222;transform:scaleX(0.9737);transform-origin:0 0;text-decoration:underline;text-decoration-color:#999">SCHED</div>
<div class="abs" style="left:893.62px;top:461px;font-family:'Liberation Sans';font-size:11px;font-weight:normal;letter-spacing:0px;white-space:nowrap;line-height:1;color:#222;transform:scaleX(0.9737);transform-origin:0 0;text-decoration:underline;text-decoration-color:#999">SCHED</div>
<div class="abs" style="left:1034.75px;top:461px;font-family:'Liberation Sans';font-size:11px;font-weight:normal;letter-spacing:0px;white-space:nowrap;line-height:1;color:#222;transform:scaleX(0.9737);transform-origin:0 0;text-decoration:underline;text-decoration-color:#999">SCHED</div>
<div class="abs" style="left:48.85px;top:481px;font-family:'Liberation Sans';font-size:11px;font-weight:bold;letter-spacing:0px;white-space:nowrap;line-height:1;color:#111;transform:scaleX(1.2385);transform-origin:0 0;">6:00AM</div>
<div class="abs" style="left:1162.35px;top:481px;font-family:'Liberation Sans';font-size:11px;font-weight:bold;letter-spacing:0px;white-space:nowrap;line-height:1;color:#111;transform:scaleX(1.2385);transform-origin:0 0;">6:00AM</div>
<div class="abs" style="left:188.00px;top:481px;font-family:'Liberation Sans';font-size:11px;font-weight:normal;letter-spacing:0px;white-space:nowrap;line-height:1;color:#222;transform:scaleX(0.9737);transform-origin:0 0;text-decoration:underline;text-decoration-color:#999">SCHED</div>
<div class="abs" style="left:329.12px;top:481px;font-family:'Liberation Sans';font-size:11px;font-weight:normal;letter-spacing:0px;white-space:nowrap;line-height:1;color:#222;transform:scaleX(0.9737);transform-origin:0 0;text-decoration:underline;text-decoration-color:#999">SCHED</div>
<div class="abs" style="left:470.25px;top:481px;font-family:'Liberation Sans';font-size:11px;font-weight:normal;letter-spacing:0px;white-space:nowrap;line-height:1;color:#222;transform:scaleX(0.9737);transform-origin:0 0;text-decoration:underline;text-decoration-color:#999">SCHED</div>
<div class="abs" style="left:611.38px;top:481px;font-family:'Liberation Sans';font-size:11px;font-weight:normal;letter-spacing:0px;white-space:nowrap;line-height:1;color:#222;transform:scaleX(0.9737);transform-origin:0 0;text-decoration:underline;text-decoration-color:#999">SCHED</div>
<div class="abs" style="left:752.50px;top:481px;font-family:'Liberation Sans';font-size:11px;font-weight:normal;letter-spacing:0px;white-space:nowrap;line-height:1;color:#222;transform:scaleX(0.9737);transform-origin:0 0;text-decoration:underline;text-decoration-color:#999">SCHED</div>
<div class="abs" style="left:893.62px;top:481px;font-family:'Liberation Sans';font-size:11px;font-weight:normal;letter-spacing:0px;white-space:nowrap;line-height:1;color:#222;transform:scaleX(0.9737);transform-origin:0 0;text-decoration:underline;text-decoration-color:#999">SCHED</div>
<div class="abs" style="left:1034.75px;top:481px;font-family:'Liberation Sans';font-size:11px;font-weight:normal;letter-spacing:0px;white-space:nowrap;line-height:1;color:#222;transform:scaleX(0.9737);transform-origin:0 0;text-decoration:underline;text-decoration-color:#999">SCHED</div>
<div class="abs" style="left:48.85px;top:502px;font-family:'Liberation Sans';font-size:11px;font-weight:bold;letter-spacing:0px;white-space:nowrap;line-height:1;color:#111;transform:scaleX(1.2385);transform-origin:0 0;">7:00AM</div>
<div class="abs" style="left:1162.35px;top:502px;font-family:'Liberation Sans';font-size:11px;font-weight:bold;letter-spacing:0px;white-space:nowrap;line-height:1;color:#111;transform:scaleX(1.2385);transform-origin:0 0;">7:00AM</div>
<div class="abs" style="left:188.00px;top:502px;font-family:'Liberation Sans';font-size:11px;font-weight:normal;letter-spacing:0px;white-space:nowrap;line-height:1;color:#222;transform:scaleX(0.9737);transform-origin:0 0;text-decoration:underline;text-decoration-color:#999">SCHED</div>
<div class="abs" style="left:329.12px;top:502px;font-family:'Liberation Sans';font-size:11px;font-weight:normal;letter-spacing:0px;white-space:nowrap;line-height:1;color:#222;transform:scaleX(0.9737);transform-origin:0 0;text-decoration:underline;text-decoration-color:#999">SCHED</div>
<div class="abs" style="left:470.25px;top:502px;font-family:'Liberation Sans';font-size:11px;font-weight:normal;letter-spacing:0px;white-space:nowrap;line-height:1;color:#222;transform:scaleX(0.9737);transform-origin:0 0;text-decoration:underline;text-decoration-color:#999">SCHED</div>
<div class="abs" style="left:611.38px;top:502px;font-family:'Liberation Sans';font-size:11px;font-weight:normal;letter-spacing:0px;white-space:nowrap;line-height:1;color:#222;transform:scaleX(0.9737);transform-origin:0 0;text-decoration:underline;text-decoration-color:#999">SCHED</div>
<div class="abs" style="left:752.50px;top:502px;font-family:'Liberation Sans';font-size:11px;font-weight:normal;letter-spacing:0px;white-space:nowrap;line-height:1;color:#222;transform:scaleX(0.9737);transform-origin:0 0;text-decoration:underline;text-decoration-color:#999">SCHED</div>
<div class="abs" style="left:893.62px;top:502px;font-family:'Liberation Sans';font-size:11px;font-weight:normal;letter-spacing:0px;white-space:nowrap;line-height:1;color:#222;transform:scaleX(0.9737);transform-origin:0 0;text-decoration:underline;text-decoration-color:#999">SCHED</div>
<div class="abs" style="left:1034.75px;top:502px;font-family:'Liberation Sans';font-size:11px;font-weight:normal;letter-spacing:0px;white-space:nowrap;line-height:1;color:#222;transform:scaleX(0.9737);transform-origin:0 0;text-decoration:underline;text-decoration-color:#999">SCHED</div>
<div class="abs" style="left:48.85px;top:521px;font-family:'Liberation Sans';font-size:11px;font-weight:bold;letter-spacing:0px;white-space:nowrap;line-height:1;color:#111;transform:scaleX(1.2385);transform-origin:0 0;">8:00AM</div>
<div class="abs" style="left:1162.35px;top:521px;font-family:'Liberation Sans';font-size:11px;font-weight:bold;letter-spacing:0px;white-space:nowrap;line-height:1;color:#111;transform:scaleX(1.2385);transform-origin:0 0;">8:00AM</div>
<div class="abs" style="left:188.00px;top:521px;font-family:'Liberation Sans';font-size:11px;font-weight:normal;letter-spacing:0px;white-space:nowrap;line-height:1;color:#222;transform:scaleX(0.9737);transform-origin:0 0;text-decoration:underline;text-decoration-color:#999">SCHED</div>
<div class="abs" style="left:329.12px;top:521px;font-family:'Liberation Sans';font-size:11px;font-weight:normal;letter-spacing:0px;white-space:nowrap;line-height:1;color:#222;transform:scaleX(0.9737);transform-origin:0 0;text-decoration:underline;text-decoration-color:#999">SCHED</div>
<div class="abs" style="left:470.25px;top:521px;font-family:'Liberation Sans';font-size:11px;font-weight:normal;letter-spacing:0px;white-space:nowrap;line-height:1;color:#222;transform:scaleX(0.9737);transform-origin:0 0;text-decoration:underline;text-decoration-color:#999">SCHED</div>
<div class="abs" style="left:611.38px;top:521px;font-family:'Liberation Sans';font-size:11px;font-weight:normal;letter-spacing:0px;white-space:nowrap;line-height:1;color:#222;transform:scaleX(0.9737);transform-origin:0 0;text-decoration:underline;text-decoration-color:#999">SCHED</div>
<div class="abs" style="left:752.50px;top:521px;font-family:'Liberation Sans';font-size:11px;font-weight:normal;letter-spacing:0px;white-space:nowrap;line-height:1;color:#222;transform:scaleX(0.9737);transform-origin:0 0;text-decoration:underline;text-decoration-color:#999">SCHED</div>
<div class="abs" style="left:893.62px;top:521px;font-family:'Liberation Sans';font-size:11px;font-weight:normal;letter-spacing:0px;white-space:nowrap;line-height:1;color:#222;transform:scaleX(0.9737);transform-origin:0 0;text-decoration:underline;text-decoration-color:#999">SCHED</div>
<div class="abs" style="left:1034.75px;top:521px;font-family:'Liberation Sans';font-size:11px;font-weight:normal;letter-spacing:0px;white-space:nowrap;line-height:1;color:#222;transform:scaleX(0.9737);transform-origin:0 0;text-decoration:underline;text-decoration-color:#999">SCHED</div>
<div class="abs" style="left:48.85px;top:542px;font-family:'Liberation Sans';font-size:11px;font-weight:bold;letter-spacing:0px;white-space:nowrap;line-height:1;color:#111;transform:scaleX(1.2385);transform-origin:0 0;">9:00AM</div>
<div class="abs" style="left:1162.35px;top:542px;font-family:'Liberation Sans';font-size:11px;font-weight:bold;letter-spacing:0px;white-space:nowrap;line-height:1;color:#111;transform:scaleX(1.2385);transform-origin:0 0;">9:00AM</div>
<div class="abs" style="left:188.00px;top:542px;font-family:'Liberation Sans';font-size:11px;font-weight:normal;letter-spacing:0px;white-space:nowrap;line-height:1;color:#222;transform:scaleX(0.9737);transform-origin:0 0;text-decoration:underline;text-decoration-color:#999">SCHED</div>
<div class="abs" style="left:329.12px;top:542px;font-family:'Liberation Sans';font-size:11px;font-weight:normal;letter-spacing:0px;white-space:nowrap;line-height:1;color:#222;transform:scaleX(0.9737);transform-origin:0 0;text-decoration:underline;text-decoration-color:#999">SCHED</div>
<div class="abs" style="left:470.25px;top:542px;font-family:'Liberation Sans';font-size:11px;font-weight:normal;letter-spacing:0px;white-space:nowrap;line-height:1;color:#222;transform:scaleX(0.9737);transform-origin:0 0;text-decoration:underline;text-decoration-color:#999">SCHED</div>
<div class="abs" style="left:611.38px;top:542px;font-family:'Liberation Sans';font-size:11px;font-weight:normal;letter-spacing:0px;white-space:nowrap;line-height:1;color:#222;transform:scaleX(0.9737);transform-origin:0 0;text-decoration:underline;text-decoration-color:#999">SCHED</div>
<div class="abs" style="left:752.50px;top:542px;font-family:'Liberation Sans';font-size:11px;font-weight:normal;letter-spacing:0px;white-space:nowrap;line-height:1;color:#222;transform:scaleX(0.9737);transform-origin:0 0;text-decoration:underline;text-decoration-color:#999">SCHED</div>
<div class="abs" style="left:893.62px;top:542px;font-family:'Liberation Sans';font-size:11px;font-weight:normal;letter-spacing:0px;white-space:nowrap;line-height:1;color:#222;transform:scaleX(0.9737);transform-origin:0 0;text-decoration:underline;text-decoration-color:#999">SCHED</div>
<div class="abs" style="left:1034.75px;top:542px;font-family:'Liberation Sans';font-size:11px;font-weight:normal;letter-spacing:0px;white-space:nowrap;line-height:1;color:#222;transform:scaleX(0.9737);transform-origin:0 0;text-decoration:underline;text-decoration-color:#999">SCHED</div>
<div class="abs" style="left:45.15px;top:562px;font-family:'Liberation Sans';font-size:11px;font-weight:bold;letter-spacing:0px;white-space:nowrap;line-height:1;color:#111;transform:scaleX(1.2378);transform-origin:0 0;">10:00AM</div>
<div class="abs" style="left:1158.65px;top:562px;font-family:'Liberation Sans';font-size:11px;font-weight:bold;letter-spacing:0px;white-space:nowrap;line-height:1;color:#111;transform:scaleX(1.2378);transform-origin:0 0;">10:00AM</div>
<div class="abs" style="left:188.00px;top:562px;font-family:'Liberation Sans';font-size:11px;font-weight:normal;letter-spacing:0px;white-space:nowrap;line-height:1;color:#222;transform:scaleX(0.9737);transform-origin:0 0;text-decoration:underline;text-decoration-color:#999">SCHED</div>
<div class="abs" style="left:329.12px;top:562px;font-family:'Liberation Sans';font-size:11px;font-weight:normal;letter-spacing:0px;white-space:nowrap;line-height:1;color:#222;transform:scaleX(0.9737);transform-origin:0 0;text-decoration:underline;text-decoration-color:#999">SCHED</div>
<div class="abs" style="left:470.25px;top:562px;font-family:'Liberation Sans';font-size:11px;font-weight:normal;letter-spacing:0px;white-space:nowrap;line-height:1;color:#222;transform:scaleX(0.9737);transform-origin:0 0;text-decoration:underline;text-decoration-color:#999">SCHED</div>
<div class="abs" style="left:611.38px;top:562px;font-family:'Liberation Sans';font-size:11px;font-weight:normal;letter-spacing:0px;white-space:nowrap;line-height:1;color:#222;transform:scaleX(0.9737);transform-origin:0 0;text-decoration:underline;text-decoration-color:#999">SCHED</div>
<div class="abs" style="left:752.50px;top:562px;font-family:'Liberation Sans';font-size:11px;font-weight:normal;letter-spacing:0px;white-space:nowrap;line-height:1;color:#222;transform:scaleX(0.9737);transform-origin:0 0;text-decoration:underline;text-decoration-color:#999">SCHED</div>
<div class="abs" style="left:893.62px;top:562px;font-family:'Liberation Sans';font-size:11px;font-weight:normal;letter-spacing:0px;white-space:nowrap;line-height:1;color:#222;transform:scaleX(0.9737);transform-origin:0 0;text-decoration:underline;text-decoration-color:#999">SCHED</div>
<div class="abs" style="left:1034.75px;top:562px;font-family:'Liberation Sans';font-size:11px;font-weight:normal;letter-spacing:0px;white-space:nowrap;line-height:1;color:#222;transform:scaleX(0.9737);transform-origin:0 0;text-decoration:underline;text-decoration-color:#999">SCHED</div>
<div class="abs" style="left:45.15px;top:582px;font-family:'Liberation Sans';font-size:11px;font-weight:bold;letter-spacing:0px;white-space:nowrap;line-height:1;color:#111;transform:scaleX(1.2659);transform-origin:0 0;">11:00AM</div>
<div class="abs" style="left:1158.65px;top:582px;font-family:'Liberation Sans';font-size:11px;font-weight:bold;letter-spacing:0px;white-space:nowrap;line-height:1;color:#111;transform:scaleX(1.2659);transform-origin:0 0;">11:00AM</div>
<div class="abs" style="left:188.00px;top:582px;font-family:'Liberation Sans';font-size:11px;font-weight:normal;letter-spacing:0px;white-space:nowrap;line-height:1;color:#222;transform:scaleX(0.9737);transform-origin:0 0;text-decoration:underline;text-decoration-color:#999">SCHED</div>
<div class="abs" style="left:329.12px;top:582px;font-family:'Liberation Sans';font-size:11px;font-weight:normal;letter-spacing:0px;white-space:nowrap;line-height:1;color:#222;transform:scaleX(0.9737);transform-origin:0 0;text-decoration:underline;text-decoration-color:#999">SCHED</div>
<div class="abs" style="left:470.25px;top:582px;font-family:'Liberation Sans';font-size:11px;font-weight:normal;letter-spacing:0px;white-space:nowrap;line-height:1;color:#222;transform:scaleX(0.9737);transform-origin:0 0;text-decoration:underline;text-decoration-color:#999">SCHED</div>
<div class="abs" style="left:611.38px;top:582px;font-family:'Liberation Sans';font-size:11px;font-weight:normal;letter-spacing:0px;white-space:nowrap;line-height:1;color:#222;transform:scaleX(0.9737);transform-origin:0 0;text-decoration:underline;text-decoration-color:#999">SCHED</div>
<div class="abs" style="left:752.50px;top:582px;font-family:'Liberation Sans';font-size:11px;font-weight:normal;letter-spacing:0px;white-space:nowrap;line-height:1;color:#222;transform:scaleX(0.9737);transform-origin:0 0;text-decoration:underline;text-decoration-color:#999">SCHED</div>
<div class="abs" style="left:893.62px;top:582px;font-family:'Liberation Sans';font-size:11px;font-weight:normal;letter-spacing:0px;white-space:nowrap;line-height:1;color:#222;transform:scaleX(0.9737);transform-origin:0 0;text-decoration:underline;text-decoration-color:#999">SCHED</div>
<div class="abs" style="left:1034.75px;top:582px;font-family:'Liberation Sans';font-size:11px;font-weight:normal;letter-spacing:0px;white-space:nowrap;line-height:1;color:#222;transform:scaleX(0.9737);transform-origin:0 0;text-decoration:underline;text-decoration-color:#999">SCHED</div>
<div class="abs" style="left:45.15px;top:602px;font-family:'Liberation Sans';font-size:11px;font-weight:bold;letter-spacing:0px;white-space:nowrap;line-height:1;color:#111;transform:scaleX(1.2659);transform-origin:0 0;">12:00PM</div>
<div class="abs" style="left:1158.65px;top:602px;font-family:'Liberation Sans';font-size:11px;font-weight:bold;letter-spacing:0px;white-space:nowrap;line-height:1;color:#111;transform:scaleX(1.2659);transform-origin:0 0;">12:00PM</div>
<div class="abs" style="left:188.00px;top:602px;font-family:'Liberation Sans';font-size:11px;font-weight:normal;letter-spacing:0px;white-space:nowrap;line-height:1;color:#222;transform:scaleX(0.9737);transform-origin:0 0;text-decoration:underline;text-decoration-color:#999">SCHED</div>
<div class="abs" style="left:329.12px;top:602px;font-family:'Liberation Sans';font-size:11px;font-weight:normal;letter-spacing:0px;white-space:nowrap;line-height:1;color:#222;transform:scaleX(0.9737);transform-origin:0 0;text-decoration:underline;text-decoration-color:#999">SCHED</div>
<div class="abs" style="left:470.25px;top:602px;font-family:'Liberation Sans';font-size:11px;font-weight:normal;letter-spacing:0px;white-space:nowrap;line-height:1;color:#222;transform:scaleX(0.9737);transform-origin:0 0;text-decoration:underline;text-decoration-color:#999">SCHED</div>
<div class="abs" style="left:611.38px;top:602px;font-family:'Liberation Sans';font-size:11px;font-weight:normal;letter-spacing:0px;white-space:nowrap;line-height:1;color:#222;transform:scaleX(0.9737);transform-origin:0 0;text-decoration:underline;text-decoration-color:#999">SCHED</div>
<div class="abs" style="left:752.50px;top:602px;font-family:'Liberation Sans';font-size:11px;font-weight:normal;letter-spacing:0px;white-space:nowrap;line-height:1;color:#222;transform:scaleX(0.9737);transform-origin:0 0;text-decoration:underline;text-decoration-color:#999">SCHED</div>
<div class="abs" style="left:893.62px;top:602px;font-family:'Liberation Sans';font-size:11px;font-weight:normal;letter-spacing:0px;white-space:nowrap;line-height:1;color:#222;transform:scaleX(0.9737);transform-origin:0 0;text-decoration:underline;text-decoration-color:#999">SCHED</div>
<div class="abs" style="left:1034.75px;top:602px;font-family:'Liberation Sans';font-size:11px;font-weight:normal;letter-spacing:0px;white-space:nowrap;line-height:1;color:#222;transform:scaleX(0.9737);transform-origin:0 0;text-decoration:underline;text-decoration-color:#999">SCHED</div>
<div class="abs" style="left:48.85px;top:622px;font-family:'Liberation Sans';font-size:11px;font-weight:bold;letter-spacing:0px;white-space:nowrap;line-height:1;color:#111;transform:scaleX(1.2711);transform-origin:0 0;">1:00PM</div>
<div class="abs" style="left:1162.35px;top:622px;font-family:'Liberation Sans';font-size:11px;font-weight:bold;letter-spacing:0px;white-space:nowrap;line-height:1;color:#111;transform:scaleX(1.2711);transform-origin:0 0;">1:00PM</div>
<div class="abs" style="left:188.00px;top:622px;font-family:'Liberation Sans';font-size:11px;font-weight:normal;letter-spacing:0px;white-space:nowrap;line-height:1;color:#222;transform:scaleX(0.9737);transform-origin:0 0;text-decoration:underline;text-decoration-color:#999">SCHED</div>
<div class="abs" style="left:329.12px;top:622px;font-family:'Liberation Sans';font-size:11px;font-weight:normal;letter-spacing:0px;white-space:nowrap;line-height:1;color:#222;transform:scaleX(0.9737);transform-origin:0 0;text-decoration:underline;text-decoration-color:#999">SCHED</div>
<div class="abs" style="left:470.25px;top:622px;font-family:'Liberation Sans';font-size:11px;font-weight:normal;letter-spacing:0px;white-space:nowrap;line-height:1;color:#222;transform:scaleX(0.9737);transform-origin:0 0;text-decoration:underline;text-decoration-color:#999">SCHED</div>
<div class="abs" style="left:611.38px;top:622px;font-family:'Liberation Sans';font-size:11px;font-weight:normal;letter-spacing:0px;white-space:nowrap;line-height:1;color:#222;transform:scaleX(0.9737);transform-origin:0 0;text-decoration:underline;text-decoration-color:#999">SCHED</div>
<div class="abs" style="left:752.50px;top:622px;font-family:'Liberation Sans';font-size:11px;font-weight:normal;letter-spacing:0px;white-space:nowrap;line-height:1;color:#222;transform:scaleX(0.9737);transform-origin:0 0;text-decoration:underline;text-decoration-color:#999">SCHED</div>
<div class="abs" style="left:893.62px;top:622px;font-family:'Liberation Sans';font-size:11px;font-weight:normal;letter-spacing:0px;white-space:nowrap;line-height:1;color:#222;transform:scaleX(0.9737);transform-origin:0 0;text-decoration:underline;text-decoration-color:#999">SCHED</div>
<div class="abs" style="left:1034.75px;top:622px;font-family:'Liberation Sans';font-size:11px;font-weight:normal;letter-spacing:0px;white-space:nowrap;line-height:1;color:#222;transform:scaleX(0.9737);transform-origin:0 0;text-decoration:underline;text-decoration-color:#999">SCHED</div>
<div class="abs" style="left:48.85px;top:642px;font-family:'Liberation Sans';font-size:11px;font-weight:bold;letter-spacing:0px;white-space:nowrap;line-height:1;color:#111;transform:scaleX(1.2711);transform-origin:0 0;">2:00PM</div>
<div class="abs" style="left:1162.35px;top:642px;font-family:'Liberation Sans';font-size:11px;font-weight:bold;letter-spacing:0px;white-space:nowrap;line-height:1;color:#111;transform:scaleX(1.2711);transform-origin:0 0;">2:00PM</div>
<div class="abs" style="left:188.00px;top:642px;font-family:'Liberation Sans';font-size:11px;font-weight:normal;letter-spacing:0px;white-space:nowrap;line-height:1;color:#222;transform:scaleX(0.9737);transform-origin:0 0;text-decoration:underline;text-decoration-color:#999">SCHED</div>
<div class="abs" style="left:329.12px;top:642px;font-family:'Liberation Sans';font-size:11px;font-weight:normal;letter-spacing:0px;white-space:nowrap;line-height:1;color:#222;transform:scaleX(0.9737);transform-origin:0 0;text-decoration:underline;text-decoration-color:#999">SCHED</div>
<div class="abs" style="left:470.25px;top:642px;font-family:'Liberation Sans';font-size:11px;font-weight:normal;letter-spacing:0px;white-space:nowrap;line-height:1;color:#222;transform:scaleX(0.9737);transform-origin:0 0;text-decoration:underline;text-decoration-color:#999">SCHED</div>
<div class="abs" style="left:611.38px;top:642px;font-family:'Liberation Sans';font-size:11px;font-weight:normal;letter-spacing:0px;white-space:nowrap;line-height:1;color:#222;transform:scaleX(0.9737);transform-origin:0 0;text-decoration:underline;text-decoration-color:#999">SCHED</div>
<div class="abs" style="left:752.50px;top:642px;font-family:'Liberation Sans';font-size:11px;font-weight:normal;letter-spacing:0px;white-space:nowrap;line-height:1;color:#222;transform:scaleX(0.9737);transform-origin:0 0;text-decoration:underline;text-decoration-color:#999">SCHED</div>
<div class="abs" style="left:893.62px;top:642px;font-family:'Liberation Sans';font-size:11px;font-weight:normal;letter-spacing:0px;white-space:nowrap;line-height:1;color:#222;transform:scaleX(0.9737);transform-origin:0 0;text-decoration:underline;text-decoration-color:#999">SCHED</div>
<div class="abs" style="left:1034.75px;top:642px;font-family:'Liberation Sans';font-size:11px;font-weight:normal;letter-spacing:0px;white-space:nowrap;line-height:1;color:#222;transform:scaleX(0.9737);transform-origin:0 0;text-decoration:underline;text-decoration-color:#999">SCHED</div>
<div class="abs" style="left:48.85px;top:663px;font-family:'Liberation Sans';font-size:11px;font-weight:bold;letter-spacing:0px;white-space:nowrap;line-height:1;color:#111;transform:scaleX(1.2711);transform-origin:0 0;">3:00PM</div>
<div class="abs" style="left:1162.35px;top:663px;font-family:'Liberation Sans';font-size:11px;font-weight:bold;letter-spacing:0px;white-space:nowrap;line-height:1;color:#111;transform:scaleX(1.2711);transform-origin:0 0;">3:00PM</div>
<div class="abs" style="left:188.00px;top:663px;font-family:'Liberation Sans';font-size:11px;font-weight:normal;letter-spacing:0px;white-space:nowrap;line-height:1;color:#222;transform:scaleX(0.9737);transform-origin:0 0;text-decoration:underline;text-decoration-color:#999">SCHED</div>
<div class="abs" style="left:329.12px;top:663px;font-family:'Liberation Sans';font-size:11px;font-weight:normal;letter-spacing:0px;white-space:nowrap;line-height:1;color:#222;transform:scaleX(0.9737);transform-origin:0 0;text-decoration:underline;text-decoration-color:#999">SCHED</div>
<div class="abs" style="left:470.25px;top:663px;font-family:'Liberation Sans';font-size:11px;font-weight:normal;letter-spacing:0px;white-space:nowrap;line-height:1;color:#222;transform:scaleX(0.9737);transform-origin:0 0;text-decoration:underline;text-decoration-color:#999">SCHED</div>
<div class="abs" style="left:611.38px;top:663px;font-family:'Liberation Sans';font-size:11px;font-weight:normal;letter-spacing:0px;white-space:nowrap;line-height:1;color:#222;transform:scaleX(0.9737);transform-origin:0 0;text-decoration:underline;text-decoration-color:#999">SCHED</div>
<div class="abs" style="left:752.50px;top:663px;font-family:'Liberation Sans';font-size:11px;font-weight:normal;letter-spacing:0px;white-space:nowrap;line-height:1;color:#222;transform:scaleX(0.9737);transform-origin:0 0;text-decoration:underline;text-decoration-color:#999">SCHED</div>
<div class="abs" style="left:893.62px;top:663px;font-family:'Liberation Sans';font-size:11px;font-weight:normal;letter-spacing:0px;white-space:nowrap;line-height:1;color:#222;transform:scaleX(0.9737);transform-origin:0 0;text-decoration:underline;text-decoration-color:#999">SCHED</div>
<div class="abs" style="left:1034.75px;top:663px;font-family:'Liberation Sans';font-size:11px;font-weight:normal;letter-spacing:0px;white-space:nowrap;line-height:1;color:#222;transform:scaleX(0.9737);transform-origin:0 0;text-decoration:underline;text-decoration-color:#999">SCHED</div>
<div id="sb" class="abs"></div>
<svg class="abs" style="left:1264.6px;top:98px" width="12" height="8" viewBox="0 0 12 8"><path d="M1 7L6 2L11 7Z" fill="#a3a3a3"/></svg>
<div id="thumb" class="abs"></div>
<svg class="abs" style="left:1264.6px;top:665px" width="12" height="8" viewBox="0 0 12 8"><path d="M1 1L6 6L11 1Z" fill="#505050"/></svg>
</body></html>
